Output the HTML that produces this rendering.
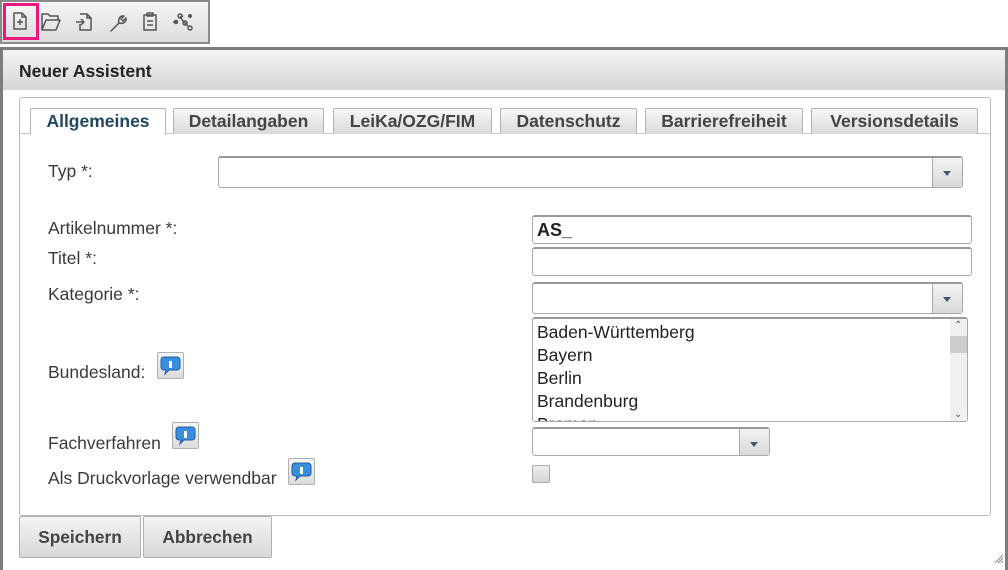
<!DOCTYPE html>
<html><head><meta charset="utf-8"><style>
*{box-sizing:border-box;margin:0;padding:0}
body{width:1008px;height:570px;background:#fff;font-family:"Liberation Sans",Arial,sans-serif;position:relative;overflow:hidden;color:#333}
.abs{position:absolute}
#tb{left:0;top:0;width:210px;height:44px;border:2px solid #8a8a8a;background:linear-gradient(#f6f6f6,#dcdcdc)}
#pink{left:3px;top:3px;width:36px;height:37px;border:3px solid #e8197d}
#dlg{left:0;top:47px;width:1008px;height:523px;border:3px solid #7d7d7d;border-bottom:none;background:#fff}
#title{left:3px;top:50px;width:1002px;height:40px;background:linear-gradient(#f4f4f4,#d6d6d6);font-weight:bold;font-size:17.5px;color:#222;padding:11px 0 0 16px}
#panel{left:19px;top:97px;width:972px;height:419px;border:1px solid #bbb;border-radius:3px}
.tab{position:absolute;top:108px;height:26px;border:1px solid #b5b5b5;border-bottom:none;background:linear-gradient(#f7f7f7,#dadada);font-weight:bold;font-size:17.5px;color:#444;text-align:center;line-height:25px;border-radius:2px 2px 0 0}
.tab.act{background:#fff;color:#22475e;height:27px}
.tabline{left:20px;top:133px;width:970px;height:1px;background:#c8c8c8}
.lbl{position:absolute;left:48px;font-size:17.5px;color:#3a3a3a}
.inp{position:absolute;border:1px solid #aaa;border-top:2px solid #999;border-radius:3px;background:#fff}
.btn{position:absolute;border-left:1px solid #aaa;background:linear-gradient(#f3f3f3,#d9d9d9);width:30px;top:0;bottom:0;right:0}
.btn:after{content:"";position:absolute;left:10px;top:13px;border:4px solid transparent;border-top:5px solid #3e5a6b}
.info{position:absolute;width:27px;height:27px;border:1px solid #b0b0b0;border-radius:2px;background:linear-gradient(#f6f6f6,#dcdcdc)}
.list{font-size:17.5px;color:#222;line-height:23px}
.fb{position:absolute;top:516px;height:42px;border:1px solid #b0b0b0;border-radius:2px;background:linear-gradient(#f4f4f4,#d8d8d8);font-weight:bold;font-size:17.3px;color:#444;text-align:center;line-height:40px}
</style></head><body>
<div id="tb" class="abs"></div>
<div id="pink" class="abs"></div>
<svg class="abs" style="left:0;top:0" width="210" height="44" fill="none" stroke="#555" stroke-width="1.5" stroke-linejoin="round">
<path d="M14 13h8l4 4v12h-12z M22 13v4h4"/><path d="M20 19v6M17 22h6"/>
<path d="M42 30V14h6l2 2h8v4 M42 30l4-10h14l-4 10z"/>
<path d="M80 14h7l4 4v12h-11v-6 M87 14v4h4 M76 22h8M81 19l3 3-3 3"/>
<path d="M111 31l8-8c-1-3 0-6 3-7l2 0-3 3 2 2 3-3 0 2c-1 3-4 4-7 3l-8 8z"/>
<path d="M144 15h12v15h-12z M147 13h6v3h-6z M147 21h6M147 25h6"/>
<path d="M173 22h5M184 22l-4-5M184 22l4 4M180 17l3-1" /><circle cx="176" cy="22" r="1.5" fill="#555"/><circle cx="180" cy="16" r="2"/><circle cx="185" cy="23" r="2"/><circle cx="190" cy="28" r="2"/><circle cx="190" cy="16" r="1.2" fill="#555"/>
</svg>
<div id="dlg" class="abs"></div>
<div id="title" class="abs">Neuer Assistent</div>
<div id="panel" class="abs"></div>
<div class="tabline abs"></div>
<div class="tab act" style="left:30px;width:136px">Allgemeines</div>
<div class="tab" style="left:173px;width:151px">Detailangaben</div>
<div class="tab" style="left:333px;width:159px">LeiKa/OZG/FIM</div>
<div class="tab" style="left:500px;width:137px">Datenschutz</div>
<div class="tab" style="left:645px;width:158px">Barrierefreiheit</div>
<div class="tab" style="left:811px;width:167px">Versionsdetails</div>

<div class="lbl" style="top:161px">Typ *:</div>
<div class="inp" style="left:218px;top:156px;width:745px;height:32px"><div class="btn"></div></div>
<div class="lbl" style="top:218px">Artikelnummer *:</div>
<div class="inp" style="left:532px;top:215px;width:440px;height:29px;font-weight:bold;font-size:18px;color:#222;padding:3px 0 0 4px">AS_</div>
<div class="lbl" style="top:248px">Titel *:</div>
<div class="inp" style="left:532px;top:247px;width:440px;height:29px"></div>
<div class="lbl" style="top:284px">Kategorie *:</div>
<div class="inp" style="left:532px;top:282px;width:431px;height:32px"><div class="btn"></div></div>
<div class="lbl" style="top:362px">Bundesland:</div>
<div class="inp list" style="left:532px;top:317px;width:436px;height:105px;overflow:hidden;padding:2px 0 0 4px">Baden-Württemberg<br>Bayern<br>Berlin<br>Brandenburg<br>Bremen
<div style="position:absolute;right:0;top:0;width:17px;height:104px;background:#f0f0f0"><div style="position:absolute;top:17px;width:17px;height:17px;background:#cdcdcd"></div><div style="position:absolute;top:0;left:4px;font-size:10px;line-height:14px;color:#555">&#8963;</div><div style="position:absolute;bottom:2px;left:4px;font-size:10px;line-height:12px;color:#555">&#8964;</div></div></div>
<div class="lbl" style="top:433px">Fachverfahren</div>
<div class="inp" style="left:532px;top:427px;width:238px;height:29px"><div class="btn"></div></div>
<div class="lbl" style="top:468px">Als Druckvorlage verwendbar</div>
<div class="abs" style="left:532px;top:465px;width:18px;height:18px;border:1px solid #aaa;border-radius:2px;background:linear-gradient(#eee,#d4d4d4)"></div>
<div class="info" style="left:157px;top:352px"></div>
<div class="info" style="left:172px;top:422px"></div>
<div class="info" style="left:288px;top:458px"></div>
<div class="fb" style="left:19px;width:122px">Speichern</div>
<div class="fb" style="left:143px;width:129px">Abbrechen</div>
<svg class="abs" style="left:157px;top:352px" width="28" height="28"><path d="M7 5h13a3 3 0 0 1 3 3v7a3 3 0 0 1-3 3h-8l-4 4 1-4h-2a3 3 0 0 1-3-3V8a3 3 0 0 1 3-3z" fill="#3a8ee0" stroke="#1d5fa5"/><rect x="12" y="9" width="3" height="7" fill="#fff"/></svg>
<svg class="abs" style="left:172px;top:422px" width="28" height="28"><path d="M7 5h13a3 3 0 0 1 3 3v7a3 3 0 0 1-3 3h-8l-4 4 1-4h-2a3 3 0 0 1-3-3V8a3 3 0 0 1 3-3z" fill="#3a8ee0" stroke="#1d5fa5"/><rect x="12" y="9" width="3" height="7" fill="#fff"/></svg>
<svg class="abs" style="left:288px;top:458px" width="28" height="28"><path d="M7 5h13a3 3 0 0 1 3 3v7a3 3 0 0 1-3 3h-8l-4 4 1-4h-2a3 3 0 0 1-3-3V8a3 3 0 0 1 3-3z" fill="#3a8ee0" stroke="#1d5fa5"/><rect x="12" y="9" width="3" height="7" fill="#fff"/></svg>
<svg class="abs" style="left:994px;top:554px" width="10" height="10" stroke="#888"><path d="M9 1L1 9M9 4L4 9M9 7L7 9"/></svg>
</body></html>
